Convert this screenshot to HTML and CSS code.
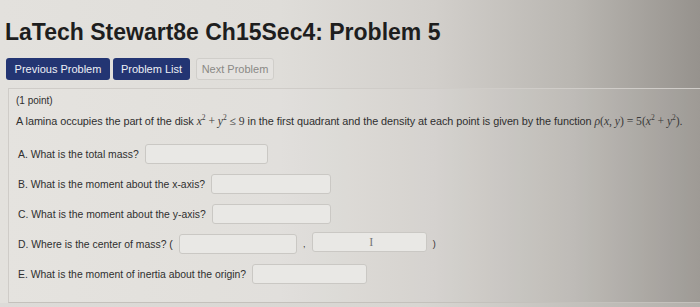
FILE: index.html
```html
<!DOCTYPE html>
<html>
<head>
<meta charset="utf-8">
<link rel="stylesheet" href="styles.css">
</head>
<body>
<div class="page">
  <h1 class="title">LaTech Stewart8e Ch15Sec4: Problem 5</h1>
  <div class="nav">
    <span class="btn btn-dark btn-prev">Previous Problem</span>
    <span class="btn btn-dark btn-list">Problem List</span>
    <span class="btn btn-light">Next Problem</span>
  </div>
  <div class="panel">
    <div class="points">(1 point)</div>
    <div class="statement">A lamina occupies the part of the disk <span class="math"><i>x</i><sup>2</sup> + <i>y</i><sup>2</sup> ≤ 9</span> in the first quadrant and the density at each point is given by the function <span class="math"><i>ρ</i>(<i>x</i>, <i>y</i>) = 5(<i>x</i><sup>2</sup> + <i>y</i><sup>2</sup>)</span>.</div>
    <div class="row"><span class="label">A. What is the total mass?</span><span class="field w-a"></span></div>
    <div class="row"><span class="label">B. What is the moment about the x-axis?</span><span class="field w-b"></span></div>
    <div class="row"><span class="label">C. What is the moment about the y-axis?</span><span class="field w-c"></span></div>
    <div class="row"><span class="label">D. Where is the center of mass? (</span><span class="field w-d1"></span><span class="sep">,</span><span class="field w-d2 raised"><span class="cursor">I</span></span><span class="sep">)</span></div>
    <div class="row"><span class="label">E. What is the moment of inertia about the origin?</span><span class="field w-e"></span></div>
  </div>
  <div class="strip"></div>
</div>
</body>
</html>
```

FILE: styles.css
```css
html, body {
  margin: 0;
  padding: 0;
}
body {
  width: 700px;
  height: 307px;
  overflow: hidden;
  font-family: "Liberation Sans", Arial, sans-serif;
  background: linear-gradient(to right, #e3e1dd 0%, #dfddd9 40%, #d2cfcb 62%, #b9b6b1 82%, #96928d 100%);
  color: #2b2b2b;
}
.page {
  display: flex;
  flex-direction: column;
  height: 307px;
}
.title {
  margin: 0;
  padding: 19px 0 0 5px;
  font-size: 23px;
  line-height: 27px;
  font-weight: bold;
  color: #1e1e1e;
}
.nav {
  display: flex;
  margin: 12px 0 0 6px;
  height: 22px;
}
.btn {
  display: flex;
  align-items: center;
  justify-content: center;
  height: 22px;
  box-sizing: border-box;
  border-radius: 3px;
  font-size: 11px;
}
.btn-dark {
  background: #233573;
  color: #eef0f6;
}
.btn-prev {
  width: 104px;
}
.btn-list {
  width: 77px;
  margin-left: 3px;
}
.btn-light {
  width: 78px;
  margin-left: 6px;
  background: #e4e2df;
  border: 1px solid #d0ceca;
  color: #8a8986;
}
.panel {
  margin: 8px 0 0 8px;
  height: 215px;
  box-sizing: border-box;
  border-top: 1px solid #cfccc8;
  border-left: 1px solid #cfccc8;
  border-bottom: 1px solid #c4c1bc;
  padding: 5px 0 0 7px;
  background: rgba(255, 255, 255, 0.08);
  font-size: 10px;
  color: #2f2f2f;
}
.points {
  line-height: 14px;
}
.statement {
  margin-top: 6px;
  line-height: 14px;
  white-space: nowrap;
  font-size: 10.85px;
  letter-spacing: -0.05px;
}
.math {
  font-family: "Liberation Serif", "Times New Roman", serif;
  font-size: 11.7px;
  color: #3a3a3a;
}
.math sup {
  font-size: 7.5px;
  line-height: 0;
}
.row {
  display: flex;
  align-items: center;
  height: 30px;
  padding-left: 2px;
}
.statement + .row {
  margin-top: 10px;
}
.label {
  white-space: nowrap;
  font-size: 10.4px;
}
.field {
  display: flex;
  align-items: center;
  justify-content: center;
  height: 20px;
  box-sizing: border-box;
  margin-left: 6px;
  border: 1px solid #cac8c4;
  border-radius: 3px;
  background: #e9e8e5;
}
.w-a { width: 123px; }
.w-b { width: 120px; }
.w-c { width: 119px; }
.w-d1 { width: 118px; }
.w-d2 { width: 115px; margin-left: 0; }
.w-e { width: 115px; }
.raised {
  margin-top: -4px;
}
.sep {
  display: inline-block;
  width: 15px;
  text-align: center;
  font-size: 9px;
}
.cursor {
  font-family: "Liberation Serif", serif;
  font-size: 12px;
  color: #777;
  margin-left: 4px;
}
.strip {
  flex: 1;
  background: linear-gradient(to right, #dddbd8, #d8d6d2 60%, #b3b0ab);
}
```
